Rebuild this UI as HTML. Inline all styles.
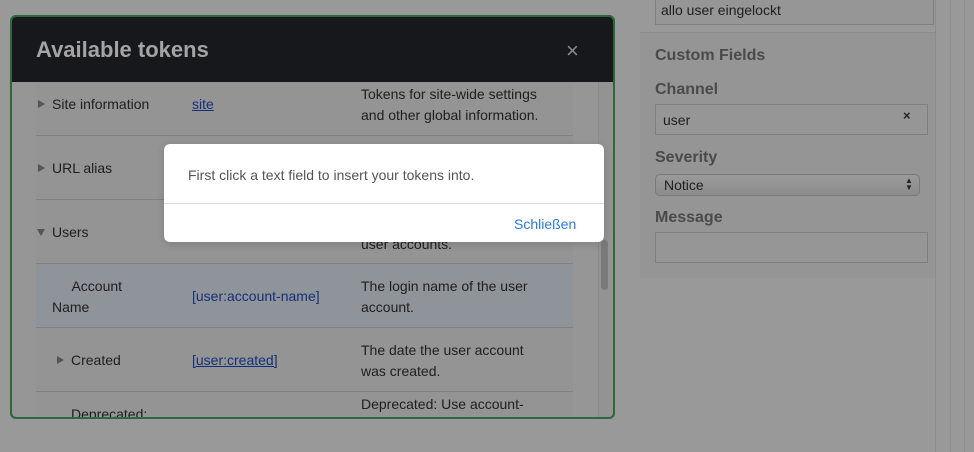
<!DOCTYPE html>
<html><head><meta charset="utf-8"><style>
*{margin:0;padding:0;box-sizing:border-box}
body{width:974px;height:452px;background:#999;position:relative;overflow:hidden;font-family:"Liberation Sans",Arial,sans-serif;font-size:14px;color:#222}
.a{position:absolute}
.lbl{position:absolute;left:655px;font-weight:bold;font-size:16px;color:#4a4a4a}
.inp{position:absolute;left:655px;width:273px;height:31px;border:1px solid #7f7f7f;background:#969696}
.t{position:absolute;font-size:14px;line-height:21px;color:#1e1e1e}
.lnk{color:#13307a}
.hr{position:absolute;left:36px;width:537px;height:1px;background:#808080}
.tri{position:absolute;width:0;height:0;border-top:4px solid transparent;border-bottom:4px solid transparent;border-left:7px solid #555}
</style></head><body>
<div class="a" style="left:640px;top:32px;width:295px;height:246px;background:#959595"></div>
<div class="a" style="left:640px;top:32px;width:295px;height:1px;background:#8e8e8e"></div>
<div class="a" style="left:935px;top:0;width:1px;height:452px;background:#8c8c8c"></div>
<div class="a" style="left:950px;top:0;width:1px;height:452px;background:#8e8e8e"></div>
<div class="a" style="left:964px;top:0;width:1px;height:452px;background:#8e8e8e"></div>
<div class="a" style="left:655px;top:-2px;width:279px;height:27px;border:1px solid #7f7f7f;background:#969696"></div>
<div class="a" style="left:661px;top:2px;font-size:14px;color:#1e1e1e">allo user eingelockt</div>
<div class="lbl" style="top:47px">Custom Fields</div>
<div class="lbl" style="top:81px">Channel</div>
<div class="inp" style="top:104px"></div>
<div class="a" style="left:663px;top:112px;font-size:14px;color:#1e1e1e">user</div>
<div class="a" style="left:903px;top:108px;font-size:13px;font-weight:bold;color:#222">×</div>
<div class="lbl" style="top:149px">Severity</div>
<div class="a" style="left:655px;top:174px;width:265px;height:22px;border:1px solid #7a7a7a;border-radius:5px;background:linear-gradient(#9a9a9a,#8c8c8c)"></div>
<div class="a" style="left:664px;top:177px;font-size:14px;color:#1e1e1e">Notice</div>
<div class="a" style="left:905px;top:177px;font-size:8px;line-height:7px;color:#222">▲<br>▼</div>
<div class="lbl" style="top:209px">Message</div>
<div class="inp" style="top:232px"></div>

<div class="a" style="left:10px;top:15px;width:605px;height:404px;border:2px solid #2c7149;border-radius:6px;background:#969696;overflow:hidden">
  <div class="a" style="left:0;top:0;width:601px;height:65px;background:#17181c"></div>
  <div class="a" style="left:24px;top:20px;font-size:22px;font-weight:bold;color:#a4a4a4">Available tokens</div>
  <div class="a" style="left:554px;top:21px;font-size:22px;color:#8a8a8a">×</div>
  <div class="a" style="left:586px;top:65px;width:15px;height:340px;background:#939393;border-left:1px solid #8a8a8a"></div>
  <div class="a" style="left:589px;top:223px;width:7px;height:50px;border-radius:4px;background:#7a7a7a"></div>
</div>
<div class="a" style="left:36px;top:82px;width:537px;height:334px;background:#949494"></div>
<div class="a" style="left:36px;top:264px;width:537px;height:63px;background:#8f949b"></div>
<div class="hr" style="top:135px"></div>
<div class="hr" style="top:199px"></div>
<div class="hr" style="top:263px"></div>
<div class="hr" style="top:327px"></div>
<div class="hr" style="top:391px"></div>

<div class="tri" style="left:38px;top:100px"></div>
<div class="t" style="left:52px;top:94px">Site information</div>
<div class="t" style="left:192px;top:94px"><u class="lnk">site</u></div>
<div class="t" style="left:361px;top:84px">Tokens for site-wide settings<br>and other global information.</div>
<div class="tri" style="left:38px;top:164px"></div>
<div class="t" style="left:52px;top:158px">URL alias</div>
<div class="a" style="left:37px;top:229px;border-left:4px solid transparent;border-right:4px solid transparent;border-top:7px solid #555"></div>
<div class="t" style="left:52px;top:222px">Users</div>
<div class="t" style="left:361px;top:234px">user accounts.</div>
<div class="t" style="left:52px;top:276px">&nbsp;&nbsp;&nbsp;&nbsp;&nbsp;Account<br>Name</div>
<div class="t" style="left:192px;top:286px"><span class="lnk">[user:account-name]</span></div>
<div class="t" style="left:361px;top:276px">The login name of the user<br>account.</div>
<div class="tri" style="left:57px;top:356px"></div>
<div class="t" style="left:71px;top:350px">Created</div>
<div class="t" style="left:192px;top:350px"><u class="lnk">[user:created]</u></div>
<div class="t" style="left:361px;top:340px">The date the user account<br>was created.</div>
<div class="t" style="left:71px;top:404px">Deprecated:</div>
<div class="t" style="left:361px;top:394px">Deprecated: Use account-</div>
<div class="a" style="left:10px;top:417px;width:605px;height:35px;background:#999"></div>
<div class="a" style="left:10px;top:15px;width:605px;height:404px;border:2px solid #28693f;border-radius:6px"></div>

<div class="a" style="left:164px;top:144px;width:440px;height:98px;background:#fff;border-radius:6px;box-shadow:0 2px 8px rgba(0,0,0,.15)">
  <div class="a" style="left:24px;top:23px;font-size:14px;color:#555">First click a text field to insert your tokens into.</div>
  <div class="a" style="left:0;top:59px;width:440px;height:1px;background:#ddd"></div>
  <div class="a" style="left:350px;top:72px;font-size:14px;color:#2a7ae2">Schließen</div>
</div>
</body></html>
